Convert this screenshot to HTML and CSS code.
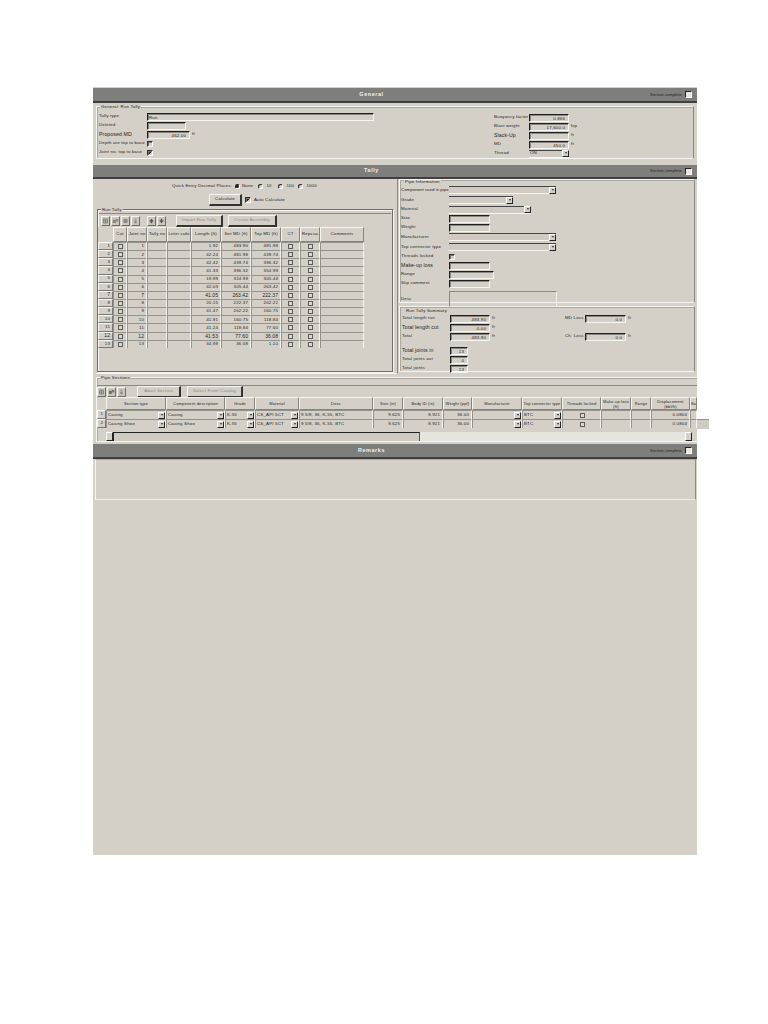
FILE: index.html
```html
<!DOCTYPE html>
<html lang="en">
<head>
<meta charset="utf-8">
<title>Run Tally</title>
<link rel="stylesheet" href="styles.css">
</head>
<body>
<main class="sheet">

<header class="bar"><h2 class="bar-title">General</h2><div class="bar-side"><span>Section complete</span><i class="bar-check"></i></div></header>
<section class="general-body">
  <div class="group general-group">
    <div class="legend">General: Run Tally</div>
    <div class="general-cols">
      <div class="gen-left">
        <div class="row"><label class="lb-48">Tally type</label><span class="in w-227">Run</span></div>
        <div class="row"><label class="lb-48">Deleted</label><span class="in w-39"></span></div>
        <div class="row"><label class="lb-48 big">Proposed MD</label><span class="in w-43 num">462.00</span><span class="unit">ft</span></div>
        <div class="row"><label class="lb-48">Depth are top to base</label><i class="cb"></i></div>
        <div class="row"><label class="lb-48">Joint no. top to base</label><i class="cb on"></i></div>
      </div>
      <div class="gen-right">
        <div class="row"><label class="lb-35">Buoyancy factor</label><span class="in w-40 num">0.866</span></div>
        <div class="row"><label class="lb-35">Blast weight</label><span class="in w-40 num">17,600.0</span><span class="unit">kip</span></div>
        <div class="row"><label class="lb-35 big">Slack-Up</label><span class="in w-40 num"></span><span class="unit">ft</span></div>
        <div class="row"><label class="lb-35">MD</label><span class="in w-40 num">450.0</span><span class="unit">ft</span></div>
        <div class="row"><label class="lb-35">Thread</label><span class="sel w-40"><span class="sel-t">ON</span><i class="dd"></i></span></div>
      </div>
    </div>
  </div>
</section>

<header class="bar bar-tally"><h2 class="bar-title">Tally</h2><div class="bar-side"><span>Section complete</span><i class="bar-check"></i></div></header>
<section class="tally-body">
  <div class="tally-left">
    <div class="quick">
      <span class="quick-label">Quick Entry Decimal Places:</span>
      <span class="opt opt-wide"><i class="radio on"></i>None</span>
      <span class="opt"><i class="radio"></i>.10</span>
      <span class="opt"><i class="radio"></i>.100</span>
      <span class="opt"><i class="radio"></i>.1000</span>
    </div>
    <div class="calc">
      <span class="btn btn-calc">Calculate</span>
      <i class="cb on"></i><span>Auto Calculate</span>
    </div>
    <div class="group run-group">
      <div class="legend">Run Tally</div>
      <div class="toolbar">
        <svg class="tool" viewBox="0 0 9 9"><path d="M2 2h5v5H2zM2 4.500h5M4.500 2v5" fill="none" stroke="#77756f"/></svg>
        <svg class="tool" viewBox="0 0 9 9"><path d="M1 3h4v4H1zM5 2h3v3H5z" fill="#8a8884"/></svg>
        <svg class="tool" viewBox="0 0 9 9"><path d="M2 2h5v5H2z" fill="#8a8884"/></svg>
        <svg class="tool" viewBox="0 0 9 9"><path d="M3 1.500h3v1H3zM3 4h3v3.500H3z" fill="#8a8884"/></svg>
        <svg class="tool tool-gap" viewBox="0 0 9 9"><path d="M4.500 1.500 7.500 5H5.500v2.500h-2V5h-2z" fill="#55534f"/></svg>
        <svg class="tool" viewBox="0 0 9 9"><path d="M4.500 7.500 7.500 4H5.500V1.500h-2V4h-2z" fill="#55534f"/></svg>
        <span class="btn btn-off btn-import">Import Run Tally</span>
        <span class="btn btn-off btn-create">Create Assembly</span>
      </div>
      <div class="runs">
        <div class="tr tr-head"><b class="corner"></b><b>Cut</b><b>Joint no</b><b>Tally no</b><b class="two">Letter code</b><b>Length (ft)</b><b>Set MD (ft)</b><b>Top MD (ft)</b><b>CT</b><b>Repcsa</b><b>Comments</b></div>
        <div class="tr"><b class="rh">1</b><span class="c"><i class="tick"></i></span><span class="r">1</span><span></span><span></span><span class="r">1.92</span><span class="r">483.90</span><span class="r">481.98</span><span class="c"><i class="tick"></i></span><span class="c"><i class="tick"></i></span><span></span></div>
        <div class="tr"><b class="rh">2</b><span class="c"><i class="tick"></i></span><span class="r">2</span><span></span><span></span><span class="r">42.24</span><span class="r">481.98</span><span class="r">439.74</span><span class="c"><i class="tick"></i></span><span class="c"><i class="tick"></i></span><span></span></div>
        <div class="tr"><b class="rh">3</b><span class="c"><i class="tick"></i></span><span class="r">3</span><span></span><span></span><span class="r">42.42</span><span class="r">439.74</span><span class="r">396.32</span><span class="c"><i class="tick"></i></span><span class="c"><i class="tick"></i></span><span></span></div>
        <div class="tr"><b class="rh">4</b><span class="c"><i class="tick"></i></span><span class="r">4</span><span></span><span></span><span class="r">41.33</span><span class="r">396.32</span><span class="r">354.99</span><span class="c"><i class="tick"></i></span><span class="c"><i class="tick"></i></span><span></span></div>
        <div class="tr"><b class="rh">5</b><span class="c"><i class="tick"></i></span><span class="r">5</span><span></span><span></span><span class="r">19.99</span><span class="r">324.99</span><span class="r">305.44</span><span class="c"><i class="tick"></i></span><span class="c"><i class="tick"></i></span><span></span></div>
        <div class="tr"><b class="rh">6</b><span class="c"><i class="tick"></i></span><span class="r">6</span><span></span><span></span><span class="r">42.03</span><span class="r">305.44</span><span class="r">263.42</span><span class="c"><i class="tick"></i></span><span class="c"><i class="tick"></i></span><span></span></div>
        <div class="tr tr-big"><b class="rh">7</b><span class="c"><i class="tick"></i></span><span class="r">7</span><span></span><span></span><span class="r">41.05</span><span class="r">263.42</span><span class="r">222.37</span><span class="c"><i class="tick"></i></span><span class="c"><i class="tick"></i></span><span></span></div>
        <div class="tr"><b class="rh">8</b><span class="c"><i class="tick"></i></span><span class="r">8</span><span></span><span></span><span class="r">20.15</span><span class="r">222.37</span><span class="r">202.22</span><span class="c"><i class="tick"></i></span><span class="c"><i class="tick"></i></span><span></span></div>
        <div class="tr"><b class="rh">9</b><span class="c"><i class="tick"></i></span><span class="r">9</span><span></span><span></span><span class="r">41.47</span><span class="r">202.22</span><span class="r">160.75</span><span class="c"><i class="tick"></i></span><span class="c"><i class="tick"></i></span><span></span></div>
        <div class="tr"><b class="rh">10</b><span class="c"><i class="tick"></i></span><span class="r">10</span><span></span><span></span><span class="r">41.91</span><span class="r">160.75</span><span class="r">118.84</span><span class="c"><i class="tick"></i></span><span class="c"><i class="tick"></i></span><span></span></div>
        <div class="tr"><b class="rh">11</b><span class="c"><i class="tick"></i></span><span class="r">11</span><span></span><span></span><span class="r">41.24</span><span class="r">118.84</span><span class="r">77.60</span><span class="c"><i class="tick"></i></span><span class="c"><i class="tick"></i></span><span></span></div>
        <div class="tr tr-big"><b class="rh">12</b><span class="c"><i class="tick"></i></span><span class="r">12</span><span></span><span></span><span class="r">41.53</span><span class="r">77.60</span><span class="r">36.08</span><span class="c"><i class="tick"></i></span><span class="c"><i class="tick"></i></span><span></span></div>
        <div class="tr"><b class="rh">13</b><span class="c"><i class="tick"></i></span><span class="r">13</span><span></span><span></span><span class="r">34.98</span><span class="r">36.08</span><span class="r">1.10</span><span class="c"><i class="tick"></i></span><span class="c"><i class="tick"></i></span><span></span></div>
      </div>
    </div>
  </div>

  <div class="tally-right">
    <div class="group info-group">
      <div class="legend">Pipe Information</div>
      <div class="row r-10"><label class="lb-48 tight">Component used in pipe</label><span class="sel w-107"><span class="sel-t"></span><i class="dd"></i></span></div>
      <div class="row r-10"><label class="lb-48">Grade</label><span class="sel w-64"><span class="sel-t"></span><i class="dd"></i></span></div>
      <div class="row"><label class="lb-48">Material</label><span class="sel w-82"><span class="sel-t"></span><i class="dd"></i></span></div>
      <div class="row"><label class="lb-48">Size</label><span class="in w-41"></span></div>
      <div class="row"><label class="lb-48">Weight</label><span class="in w-41"></span></div>
      <div class="row r-10"><label class="lb-48">Manufacturer</label><span class="sel w-107"><span class="sel-t"></span><i class="dd"></i></span></div>
      <div class="row r-10"><label class="lb-48">Top connector type</label><span class="sel w-107"><span class="sel-t"></span><i class="dd"></i></span></div>
      <div class="row"><label class="lb-48">Threads locked</label><i class="cb"></i></div>
      <div class="row"><label class="lb-48 big">Make-up loss</label><span class="in w-41"></span></div>
      <div class="row"><label class="lb-48">Range</label><span class="in w-45"></span></div>
      <div class="row"><label class="lb-48">Slip comment</label><span class="in w-41"></span></div>
      <div class="row row-desc"><label class="lb-48">Desc</label><span class="box"></span></div>
    </div>
    <div class="group summary-group">
      <div class="legend">Run Tally Summary</div>
      <div class="sum-line"><div class="row"><label class="lb-48">Total length run</label><span class="in w-40 num">483.90</span><span class="unit unit-fix">ft</span></div><div class="row sum-right"><label class="lb-20">MD Loss</label><span class="in w-41 num">0.0</span><span class="unit">ft</span></div></div>
      <div class="sum-line"><div class="row"><label class="lb-48 big">Total length cut</label><span class="in w-40 num">0.00</span><span class="unit unit-fix">ft</span></div></div>
      <div class="sum-line sum-gap"><div class="row"><label class="lb-48">Total</label><span class="in w-40 num">483.90</span><span class="unit unit-fix">ft</span></div><div class="row sum-right"><label class="lb-20">Ch. Loss</label><span class="in w-41 num">0.0</span><span class="unit">ft</span></div></div>
      <div class="row"><label class="lb-48 big">Total joints in</label><span class="in w-18 num">13</span></div>
      <div class="row"><label class="lb-48">Total joints out</label><span class="in w-18 num">0</span></div>
      <div class="row"><label class="lb-48">Total joints</label><span class="in w-18 num">13</span></div>
    </div>
  </div>
</section>

<section class="group pipe-group">
  <div class="legend">Pipe Sections</div>
  <div class="toolbar toolbar-pipe">
    <svg class="tool" viewBox="0 0 9 9"><path d="M2 2h5v5H2zM2 4.500h5M4.500 2v5" fill="none" stroke="#77756f"/></svg>
    <svg class="tool" viewBox="0 0 9 9"><path d="M1 3h4v4H1zM5 2h3v3H5z" fill="#77756f"/></svg>
    <svg class="tool" viewBox="0 0 9 9"><path d="M3 1.500h3v1H3zM3 4h3v3.500H3z" fill="#8a8884"/></svg>
    <span class="btn btn-off btn-abort">Abort Section</span>
    <span class="btn btn-off btn-select">Select From Catalog</span>
  </div>
  <div class="pipes">
    <div class="pr pr-head"><b class="corner"></b><b>Section type</b><b>Component description</b><b>Grade</b><b>Material</b><b>Desc</b><b>Size (in)</b><b>Body ID (in)</b><b>Weight (ppf)</b><b>Manufacturer</b><b>Top connector type</b><b>Threads locked</b><b>Make-up loss (ft)</b><b>Range</b><b>Displacement (bbl/ft)</b><b>Ba</b></div>
    <div class="pr"><b class="rh">1</b><span class="s"><em>Casing</em><i class="dd"></i></span><span class="s"><em>Casing</em><i class="dd"></i></span><span class="s"><em>K-55</em><i class="dd"></i></span><span class="s"><em>CS_API 5CT</em><i class="dd"></i></span><span>9 5/8, 36, K-55, BTC</span><span class="r">9.625</span><span class="r">8.921</span><span class="r">36.00</span><span class="s"><em></em><i class="dd"></i></span><span class="s"><em>BTC</em><i class="dd"></i></span><span class="c"><i class="tick"></i></span><span></span><span></span><span class="r">0.0804</span><span></span></div>
    <div class="pr pr-long"><b class="rh">2</b><span class="s"><em>Casing Shoe</em><i class="dd"></i></span><span class="s"><em>Casing Shoe</em><i class="dd"></i></span><span class="s"><em>K-55</em><i class="dd"></i></span><span class="s"><em>CS_API 5CT</em><i class="dd"></i></span><span>9 5/8, 36, K-55, BTC</span><span class="r">9.625</span><span class="r">8.921</span><span class="r">36.00</span><span class="s"><em></em><i class="dd"></i></span><span class="s"><em>BTC</em><i class="dd"></i></span><span class="c"><i class="tick"></i></span><span></span><span></span><span class="r">0.0804</span><span></span></div>
  </div>
  <div class="scroll"><i class="arrow arrow-l"></i><i class="thumb"></i><i class="arrow arrow-r"></i></div>
</section>

<header class="bar bar-remarks"><h2 class="bar-title">Remarks</h2><div class="bar-side"><span>Section complete</span><i class="bar-check"></i></div></header>
<section class="remarks"></section>

</main>
</body>
</html>
```

FILE: styles.css
```css
* { box-sizing: border-box; }
html, body { margin: 0; padding: 0; background: #fff; }
body {
  font: 4.4px/1 "Liberation Sans", Arial, sans-serif;
  letter-spacing: .17px;
  color: #1f1f1e;
}
.sheet {
  width: 604px;
  height: 768px;
  margin: 87px 0 0 93px;
  background: #d4d0c8;
  padding-top: 1px;
  opacity: .999;
}
i { display: block; font-style: normal; flex: none; }
em { font-style: normal; }
label { display: block; flex: none; }

/* section bars */
.bar {
  display: flex;
  align-items: center;
  height: 15px;
  background: #7e7e7c;
  border-bottom: 2px solid #3f3f3f;
}
.bar-title {
  flex: 1;
  margin: 0;
  text-align: center;
  color: #f2f2f2;
  font-size: 5.4px;
  font-weight: bold;
  letter-spacing: .6px;
}
.bar-side {
  width: 47px;
  display: flex;
  align-items: center;
  gap: 3px;
  color: #1f1f1e;
  font-size: 3.9px;
  letter-spacing: .12px;
}
.bar-side span { white-space: nowrap; }
.bar-check {
  width: 7px;
  height: 7px;
  background: #e8e6e0;
  border: 1px solid #222;
  border-right-color: #fff;
  border-bottom-color: #fff;
}

/* groups */
.group {
  border: 1px solid #f6f5f1;
  border-right-color: #8a8884;
  box-shadow: inset 1px 1px 0 #a9a7a1;
}
.legend {
  width: fit-content;
  margin: -2px 0 0 3px;
  padding: 0 1px;
  height: 5px;
  background: #d4d0c8;
}
.row { display: flex; align-items: center; height: 9px; white-space: nowrap; }
.r-10 { height: 10px; }
.big { font-size: 5.2px; letter-spacing: .1px; }
.tight { letter-spacing: 0; }
.lb-48 { width: 48px; }
.lb-35 { width: 35px; }
.lb-20 { width: 20px; }

.in {
  display: block;
  height: 8px;
  padding: 1px 1px 0 1px;
  line-height: 5px;
  border: 1px solid #1f1f1e;
  border-right-color: #f6f5f1;
  border-bottom-color: #f6f5f1;
  box-shadow: inset 1px 1px 0 #8a8884;
  overflow: hidden;
}
.num { text-align: right; padding-right: 3px; }
.unit { margin-left: 2px; }
.unit-fix { width: 4px; }
.sel {
  display: flex;
  align-items: center;
  height: 8px;
  background: #cfcbc3;
  border-top: 1px solid #444;
  border-bottom: 1px solid #f6f5f1;
}
.sel-t { flex: 1; padding-left: 1px; }
.w-18 { width: 18px; }
.w-39 { width: 39px; }
.w-40 { width: 40px; }
.w-41 { width: 41px; }
.w-43 { width: 43px; }
.w-45 { width: 45px; }
.w-64 { width: 64px; }
.w-82 { width: 82px; }
.w-107 { width: 107px; }
.w-227 { width: 227px; }

.cb {
  width: 6px;
  height: 6px;
  border: 1px solid #2e2e2c;
  border-right-color: #fff;
  border-bottom-color: #fff;
  box-shadow: inset 1px 1px 0 #77756f;
}
.cb.on { background: linear-gradient(135deg, #222 0 55%, #d4d0c8 55%); }
.dd {
  width: 7px;
  height: 7px;
  background: #d4d0c8;
  border: 1px solid #fff;
  border-right-color: #222;
  border-bottom-color: #222;
}
.dd::after {
  content: "";
  display: block;
  width: 0;
  margin: 1px auto 0;
  border: 1.500px solid transparent;
  border-top: 2px solid #333;
  border-bottom: 0;
}
.btn {
  display: flex;
  align-items: center;
  justify-content: center;
  height: 12px;
  flex: none;
  border: 1px solid #f6f5f1;
  border-right: 2px solid #333;
  border-bottom: 2px solid #333;
  white-space: nowrap;
}
.btn-off { color: #8d8b85; }

/* general */
.general-body { height: 62px; padding: 3px 3px 0; }
.general-group { height: 53px; }
.general-cols { display: flex; padding: 2px 0 0 2px; }
.gen-left { width: 395px; }
.gen-left .row:nth-child(n+4) { padding-left: 1px; }
.gen-left .row:nth-child(n+4) label { width: 47px; margin-left: -1px; margin-right: 1px; }
.gen-right { padding-top: 1px; }

/* tally */
.bar-tally { height: 14px; }
.tally-body { display: flex; height: 195px; }
.tally-left {
  width: 302px;
  margin-left: 3px;
  border-right: 1px solid #8a8884;
  border-bottom: 1px solid #f6f5f1;
}
.quick {
  display: flex;
  align-items: center;
  height: 15px;
  padding-left: 76px;
}
.quick-label { width: 63px; }
.opt { display: flex; align-items: center; gap: 2px; width: 20px; }
.opt-wide { width: 23px; }
.radio {
  width: 5px;
  height: 5px;
  border-radius: 50%;
  border: 1px solid #fff;
  border-top-color: #222;
  border-left-color: #222;
}
.radio.on { background: #222; }
.calc {
  display: flex;
  align-items: center;
  gap: 3px;
  height: 12px;
  padding-left: 113px;
}
.btn-calc { width: 33px; }
.run-group {
  width: 296px;
  height: 163px;
  margin: 3px 0 0 1px;
  border: 1px solid #6f6d68;
  box-shadow: 1px 1px 0 #f6f5f1, inset 1px 1px 0 #f6f5f1;
}
.toolbar {
  display: flex;
  align-items: center;
  gap: 1px;
  height: 14px;
  margin: 0 1px;
  padding-left: 2px;
  border-top: 1px solid #8a8884;
}
.tool {
  display: block;
  flex: none;
  width: 9px;
  height: 10px;
  background: #c9c6be;
  border: 1px solid #f6f5f1;
  border-right-color: #6f6d68;
  border-bottom-color: #6f6d68;
}
.tool-gap { margin-left: 6px; }
.btn-import { width: 47px; margin-left: 9px; }
.btn-create { width: 49px; margin-left: 4px; }

.tr {
  display: grid;
  grid-template-columns: 15px 14px 20px 20px 24px 30px 30px 30px 19px 20px 44px;
  height: 8.150px;
}
.tr > * {
  display: flex;
  align-items: center;
  min-width: 0;
  overflow: hidden;
  white-space: nowrap;
  font-weight: normal;
  border-top: 1px solid #94928c;
  border-left: 1px solid #94928c;
  border-right: 1px solid #f6f5f1;
}
.tr-big > * { font-size: 5px; letter-spacing: .05px; }
.tr-head { height: 15px; }
.tr-head > b {
  justify-content: center;
  text-align: center;
  white-space: normal;
  border: 1px solid #f6f5f1;
  border-right-color: #85837e;
  border-bottom-color: #85837e;
}
.tr-head .corner { border-color: #d4d0c8; }
.tr-head .two { font-size: 3.800px; }
.tr .rh, .pr .rh {
  justify-content: flex-end;
  padding-right: 2px;
  border: 1px solid #f6f5f1;
  border-right-color: #777;
  border-bottom-color: #777;
}
.r { justify-content: flex-end; padding-right: 2px; }
.c { justify-content: center; }
.tick {
  width: 5px;
  height: 5px;
  border: 1px solid #5c5b57;
  background: #dbd8d1;
}

/* right column of tally */
.tally-right { width: 296px; margin-left: 1px; }
.info-group { height: 124px; padding: 2px 0 0 1px; }
.row-desc { height: 18px; margin-top: 2px; }
.box {
  width: 108px;
  height: 16px;
  border: 1px solid #f1efea;
  border-top-color: #8a8884;
  border-left-color: #8a8884;
}
.summary-group { height: 66px; margin-top: 3px; padding: 4px 0 0 2px; }
.sum-line { display: flex; height: 9px; }
.sum-gap { height: 14px; }
.sum-right { margin-left: 69px; }

/* pipe sections */
.pipe-group {
  height: 65px;
  margin: 3px 0 0 3px;
  border-left: 1px solid #f6f5f1;
  border-right: 0;
}
.toolbar-pipe { height: 12px; padding-left: 0; border-top: 1px solid #8a8884; margin: 4px 0 0; }
.btn-abort { width: 44px; margin-left: 10px; }
.btn-select { width: 56px; margin-left: 5px; }
.pr {
  display: grid;
  grid-template-columns: 9px 60px 59px 30px 44px 74px 30px 40px 29px 50px 40px 39px 30px 20px 39px 7px;
  width: 600px;
  height: 9px;
}
.pr > * {
  display: flex;
  align-items: center;
  min-width: 0;
  overflow: hidden;
  white-space: nowrap;
  font-weight: normal;
  padding-left: 1px;
  border-top: 1px solid #94928c;
  border-left: 1px solid #94928c;
  border-right: 1px solid #f6f5f1;
}
.pr-head { height: 13px; }
.pr-head > b {
  justify-content: center;
  text-align: center;
  white-space: normal;
  padding: 0;
  font-size: 4px;
  line-height: 5px;
  border: 1px solid #f6f5f1;
  border-right-color: #85837e;
  border-bottom-color: #85837e;
}
.pr-head .corner { border-color: #d4d0c8; }
.pr .s em { flex: 1; }
.pr-long { position: relative; }
.pr-long::after {
  content: "";
  position: absolute;
  left: 600px;
  top: 0;
  width: 12px;
  height: 9px;
  background: #cfcbc3;
  border-top: 1px solid #94928c;
}
.scroll {
  display: flex;
  align-items: stretch;
  height: 9px;
  margin: 4px 5px 0 9px;
  background: #e6e4df;
}
.arrow {
  width: 7px;
  background: #d4d0c8;
  border: 1px solid #fff;
  border-right-color: #222;
  border-bottom-color: #222;
}
.thumb {
  width: 307px;
  background: #cfcbc3;
  border-top: 1px solid #222;
  border-left: 1px solid #222;
  border-right: 1px solid #555;
}
.arrow-r { margin-left: auto; }

/* remarks */
.bar-remarks { margin-top: 2px; }
.remarks {
  height: 41px;
  margin: 0 1px 0 2px;
  border-left: 1px solid #f6f5f1;
  border-right: 1px solid #8a8884;
  border-bottom: 1px solid #f1efea;
  border-top: 1px solid #a9a7a1;
}
```
